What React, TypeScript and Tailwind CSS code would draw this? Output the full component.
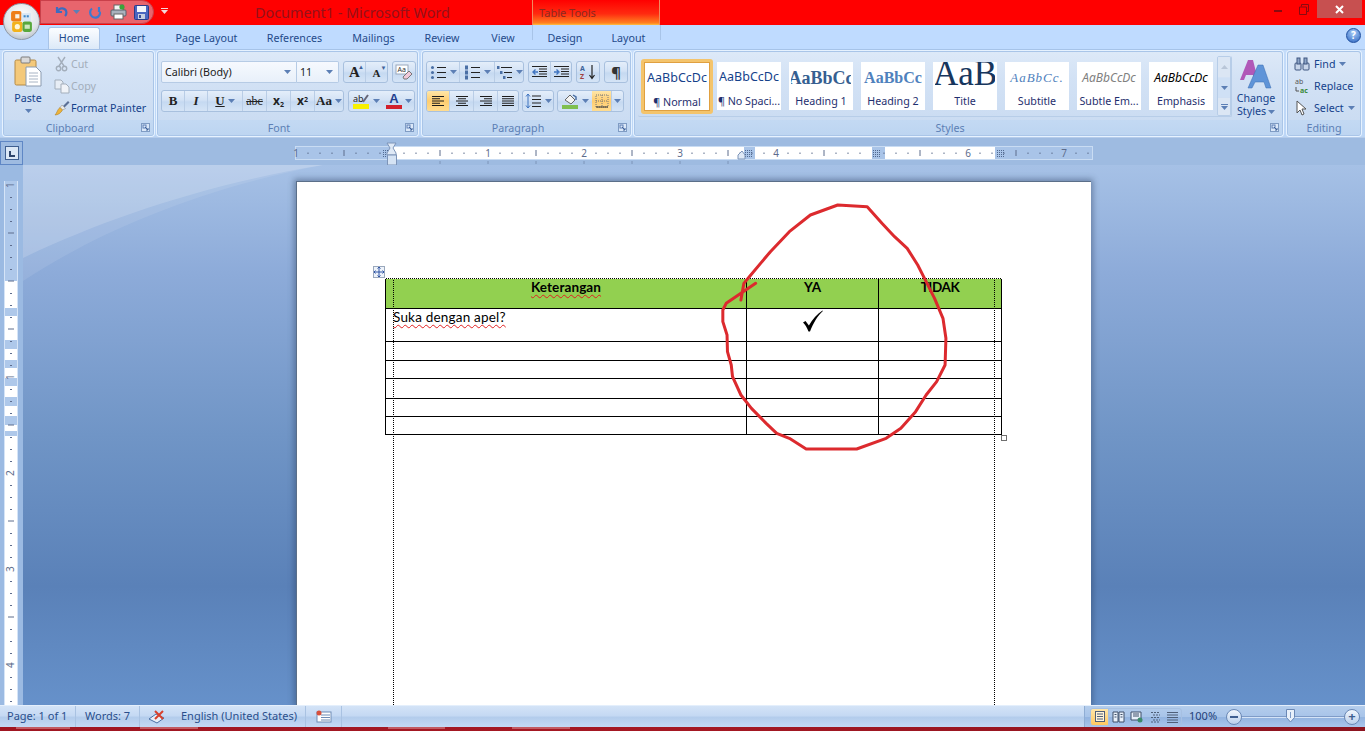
import type { ReactNode } from 'react';

const ui = { fontFamily: '"Noto Sans", sans-serif' };

function Caret({ className = '' }: { className?: string }) {
  return (
    <svg width="7" height="4" viewBox="0 0 7 4" className={`shrink-0 ${className}`}>
      <path d="M0 0h7L3.5 4z" fill="#5c7fb5" />
    </svg>
  );
}

function Launcher() {
  return (
    <svg width="9" height="9" viewBox="0 0 9 9" className="shrink-0">
      <rect x="0.5" y="0.5" width="8" height="8" fill="#dbe8f8" stroke="#7f9cc4" />
      <rect x="2" y="2" width="3" height="3" fill="none" stroke="#5c7fb5" />
      <path d="M4 4l3 3M7 5v2H5" stroke="#3f629a" fill="none" />
    </svg>
  );
}

function Group({ label, w, launcher, children }: { label: string; w: string; launcher?: boolean; children: ReactNode }) {
  return (
    <div className={`${w} h-[85px] shrink-0 flex flex-col rounded-[3px] border border-[#a9c5e8] shadow-[0_0_0_1px_#e6f2ff] overflow-hidden bg-[linear-gradient(#dde9f8,#d3e2f5_30%,#c8daf1_100%)]`}>
      <div className="h-[68px] relative">{children}</div>
      <div className={`h-[15px] pt-[1px] bg-[linear-gradient(#c3d9f3,#bdd5f1)] flex items-center justify-center relative text-[10.7px] leading-none text-[#5c7fb5] ${launcher ? 'pr-[17px]' : ''}`}>
        {label}
        {launcher && <span className="absolute right-[3px] top-[3px] flex"><Launcher /></span>}
      </div>
    </div>
  );
}

function Btn({ w, active, children, last }: { w: string; active?: boolean; children: ReactNode; last?: boolean }) {
  return (
    <div className={`${w} h-full flex items-center justify-center gap-[3px] ${last ? '' : 'border-r border-[#b9cde6]'} ${active ? 'bg-[linear-gradient(#ffe6a8,#ffcd70_50%,#ffdc90)]' : ''}`}>
      {children}
    </div>
  );
}

function BtnGroup({ w, children }: { w: string; children: ReactNode }) {
  return (
    <div className={`${w} h-[22px] shrink-0 flex rounded-[3px] overflow-hidden border border-[#a8c0de] bg-[linear-gradient(#e4eefa,#d3e2f5_45%,#c5d9f1_55%,#d5e4f6)]`}>
      {children}
    </div>
  );
}

function Lines({ kind }: { kind: 'left' | 'center' | 'right' | 'justify' }) {
  const rows = {
    left: [[2, 14], [2, 10], [2, 14], [2, 10], [2, 14]],
    center: [[2, 14], [4, 12], [2, 14], [4, 12], [2, 14]],
    right: [[2, 14], [6, 14], [2, 14], [6, 14], [2, 14]],
    justify: [[2, 14], [2, 14], [2, 14], [2, 14], [2, 14]],
  }[kind];
  return (
    <svg width="16" height="14" viewBox="0 0 16 14">
      {rows.map((r, i) => <path key={i} d={`M${r[0]} ${2.5 + i * 2.25}H${r[1]}`} stroke="#1c1c1c" />)}
    </svg>
  );
}

function Bullets({ kind }: { kind: 'dot' | 'num' | 'multi' }) {
  return (
    <svg width="17" height="15" viewBox="0 0 17 15">
      {[2, 7, 12].map((y, i) => (
        <g key={y}>
          {kind === 'dot' && <circle cx="2.5" cy={y + 0.5} r="1.5" fill="#4a6fa5" />}
          {kind === 'num' && <rect x="1" y={y - 1.5} width="3" height="4" fill="#4a6fa5" />}
          {kind === 'multi' && <rect x={1 + i * 3} y={y - 1} width="2.5" height="3" fill="#4a6fa5" />}
          <path d={`M${kind === 'multi' ? 5 + i * 3 : 7} ${y + 0.5}H16`} stroke="#222" />
        </g>
      ))}
    </svg>
  );
}

function Indent({ flip }: { flip?: boolean }) {
  return (
    <svg width="17" height="14" viewBox="0 0 17 14">
      {[1.5, 4, 6.5, 9, 11.5].map((y, i) => <path key={y} d={`M${i === 0 || i === 4 ? 1 : 8} ${y}H16`} stroke="#222" />)}
      <path d={flip ? 'M1 7h4M3.5 4.5L6 7 3.5 9.5' : 'M7 7H2M4.5 4.5L2 7l2.5 2.5'} stroke="#3f74c0" strokeWidth="1.4" fill="none" />
    </svg>
  );
}

function Tile({ name, active, top, children }: { name: string; active?: boolean; top?: boolean; children: ReactNode }) {
  return (
    <div className={`shrink-0 flex flex-col items-center bg-white overflow-hidden ${active ? 'w-[72px] h-[55px] -my-[3px] border-[3px] border-[#f4c46c] rounded-[3px] shadow-[inset_0_0_0_1px_#e0a040] pt-[1px]' : 'w-[64px] h-[48px]'}`}>
      <div className={`h-[31px] w-[60px] overflow-hidden flex justify-center whitespace-nowrap leading-none ${top ? 'items-end pb-[7px]' : 'items-center'}`}>{children}</div>
      <div className="text-[10.7px] leading-[16px] text-[#1f2f6e] whitespace-nowrap">{name}</div>
    </div>
  );
}

function Ruler() {
  const ticks = Array.from({ length: 67 }, (_, k) => k - 8);
  return (
    <div className="relative w-[798px] h-[14px] ml-[272px] mt-[8px] flex border border-[#c9dcf3] text-[10px]">
      <div className="w-[96px] bg-[#a9c4e8]" />
      <div className="w-[352px] bg-white" />
      <div className="w-[11px] bg-[#a9c4e8]" />
      <div className="w-[117px] bg-white" />
      <div className="w-[13px] bg-[#a9c4e8]" />
      <div className="w-[110px] bg-white" />
      <div className="flex-1 bg-[#a9c4e8]" />
      <svg width="798" height="22" viewBox="0 0 798 22" className="absolute left-[-1px] top-[-1px] overflow-visible">
        <defs>
          <pattern id="marks" width="2" height="2" patternUnits="userSpaceOnUse">
            <rect width="1" height="1" fill="#51698f" />
          </pattern>
        </defs>
        {ticks.map((i) => {
          const x = 97 + i * 12;
          if (i === 0 || i === 40) return null;
          if (i % 8 === 0) return <text key={i} x={x} y="11" textAnchor="middle" fontSize="10" fill="#5d6c8c" style={ui}>{Math.abs(i / 8)}</text>;
          if (i % 4 === 0) return <path key={i} d={`M${x} 4v6`} stroke="#5d6c8c" />;
          return <rect key={i} x={x - 0.5} y="6.5" width="1" height="1.5" fill="#5d6c8c" />;
        })}
        {[145, 193, 241, 289, 337, 385, 433].map((x) => <path key={x} d={`M${x} 15v3`} stroke="#7d94b8" />)}
        {[88, 450, 577, 701].map((x) => <rect key={x} x={x} y="3" width="8" height="8" fill="url(#marks)" />)}
        <path d="M92 -3h9l-3 5v0l3 5v2h-9v-2l3-5-3-5z" fill="#dfe9f6" stroke="#7d94b8" />
        <rect x="92.5" y="9" width="9" height="10" fill="#d5e3f4" stroke="#7d94b8" />
        <path d="M443 13v-4l4-4 3 4v4z" fill="#dfe9f6" stroke="#7d94b8" />
      </svg>
    </div>
  );
}

function SideRuler() {
  const bands = ['h-[100px] bg-[#aec8ea]', 'h-[27px] bg-white', 'h-[8px] bg-[#aec8ea]', 'h-[24px] bg-white', 'h-[9px] bg-[#aec8ea]', 'h-[11px] bg-white', 'h-[8px] bg-[#aec8ea]', 'h-[10px] bg-white', 'h-[8px] bg-[#aec8ea]', 'h-[11px] bg-white', 'h-[9px] bg-[#aec8ea]', 'h-[10px] bg-white', 'h-[9px] bg-[#aec8ea]', 'h-[6px] bg-white', 'h-[5px] bg-[#aec8ea]', 'flex-1 bg-white'];
  const ticks = Array.from({ length: 44 }, (_, k) => k - 8);
  return (
    <div className="relative w-[23px] h-full bg-[#9bbae2] pl-[4px] pt-[16px] shrink-0">
      <div className="relative w-[14px] h-full flex flex-col border-x border-[#d5e4f7]">
        {bands.map((b, i) => <div key={i} className={b} />)}
        <svg width="14" height="524" viewBox="0 0 14 524" className="absolute left-[-1px] top-0">
          {ticks.map((i) => {
            const y = 100 + i * 12;
            if (i % 8 === 0 && i !== 0) return <text key={i} x="7" y={y + 3} textAnchor="middle" fontSize="10" fill="#5d6c8c" transform={`rotate(-90 7 ${y})`} style={ui}>{Math.abs(i / 8)}</text>;
            if (i % 4 === 0) return <path key={i} d={`M4 ${y}h6`} stroke="#5d6c8c" />;
            return <rect key={i} x="6" y={y} width="2" height="1" fill="#5d6c8c" />;
          })}
        </svg>
      </div>
    </div>
  );
}

function Page() {
  const rows = ['h-[33px]', 'h-[19px]', 'h-[18px]', 'h-[20px]', 'h-[18px]', 'h-[18px]'];
  const cell = 'border border-black p-0 align-top';
  return (
    <div className="relative ml-[273px] mt-[16px] w-[795px] h-[524px] bg-white border-l border-t border-[#5b6f89] shadow-[0_0_6px_2px_rgba(40,60,90,0.45)] pl-[88px] pt-[96px] font-['Lato',sans-serif] text-[13.5px] text-black">
      <table className="w-[617px] border-collapse table-fixed">
        <colgroup>
          <col className="w-[361px]" />
          <col className="w-[132px]" />
          <col />
        </colgroup>
        <tbody>
          <tr className="h-[30px] bg-[#92d050] font-bold leading-[17px]">
            <td className={`${cell} text-center`}><span className="underline decoration-wavy decoration-[#e02020] decoration-1 underline-offset-2 tracking-[0.1px]">Keterangan</span></td>
            <td className={`${cell} text-center`}>YA</td>
            <td className={`${cell} text-center tracking-[-0.4px]`}>TIDAK</td>
          </tr>
          {rows.map((h, i) => (
            <tr key={h + i} className={h}>
              <td className={`${cell} pl-[7px] leading-[17px]`}>
                {i === 0 && <span className="underline decoration-wavy decoration-[#e02020] decoration-1 underline-offset-2 tracking-[0.2px]">Suka dengan apel?</span>}
              </td>
              <td className={cell}>
                {i === 0 && (
                  <svg width="22" height="24" viewBox="0 0 22 24" className="mx-auto">
                    <path d="M1 13.5l2.5-1.6 3.4 4.6C10.5 10 15 5 20.5 1.5l.4.5C15.5 7 11.5 13.5 8 22.5h-1.5C5 18.5 3.2 15.5 1 13.5z" fill="#000" />
                  </svg>
                )}
              </td>
              <td className={cell} />
            </tr>
          ))}
        </tbody>
      </table>
      {/* text boundaries and table handles, they lie over the table */}
      <div className="absolute left-[96px] top-[96px] bottom-0 border-l border-dotted border-black" />
      <div className="absolute left-[697px] top-[96px] bottom-0 border-l border-dotted border-black" />
      <div className="absolute left-[88px] top-[96px] w-[617px] border-t border-dotted border-white" />
      <div className="absolute left-[76px] top-[84px] w-[12px] h-[12px] bg-[#eef3fa] border border-[#9aa8bc] flex items-center justify-center">
        <svg width="10" height="10" viewBox="0 0 10 10"><path d="M5 0v10M0 5h10M3.5 1.5L5 0l1.5 1.5M3.5 8.5L5 10l1.5-1.5M1.5 3.5L0 5l1.5 1.5M8.5 3.5L10 5 8.5 6.5" stroke="#2f55a5" fill="none" /></svg>
      </div>
      <div className="absolute left-[704px] top-[253px] w-[6px] h-[6px] bg-white border border-[#6f6f6f]" />
      <svg width="660" height="265" viewBox="0 0 1568 795" preserveAspectRatio="none" className="absolute left-[63px] top-[13px] pointer-events-none">
        <path
          d="M940 265L905 295 870 325 862 345 862 380 872 420 873 470 882 510 885 545 905 600 930 640 965 685 990 715 1020 730 1060 762 1180 762 1250 730 1285 700 1320 650 1345 600 1370 560 1390 510 1392 430 1385 370 1365 310 1345 260 1325 210 1300 160 1270 125 1240 85 1205 35 1135 30 1070 60 1020 110 975 170 925 245 912 265 905 315"
          fill="none"
          stroke="#dc2a2e"
          strokeWidth="3"
          strokeLinejoin="round"
          strokeLinecap="round"
          vectorEffect="non-scaling-stroke"
        />
      </svg>
    </div>
  );
}

export default function App() {
  return (
    <div className="relative w-[1365px] h-[731px] overflow-hidden flex flex-col bg-[#bfdbff]" style={ui}>
      {/* title bar */}
      <div className="h-[25px] shrink-0 flex bg-[#ff0000]">
        <div className="ml-[40px] w-[114px] h-[24px] rounded-r-full bg-[#e8656d] border border-[#c9404a] flex items-center pl-[13px] gap-[5px]">
          <svg width="14" height="14" viewBox="0 0 14 14"><path d="M3 2v5h5M3.5 6.5C5 3.5 8 2.5 10.5 4c2.5 1.7 2.5 5 .5 7" stroke="#3d6cc0" strokeWidth="2.2" fill="none" /></svg>
          <Caret />
          <svg className="ml-[3px]" width="15" height="15" viewBox="0 0 15 15"><path d="M11 2v5M4 3.5C1.5 5.5 1.5 9.5 4 11.5c2.5 2 6 1.5 7.5-1.5 .5-1 .5-2.5.3-3" stroke="#3d7ad0" strokeWidth="2.2" fill="none" /></svg>
          <svg className="ml-[2px]" width="17" height="16" viewBox="0 0 17 16"><rect x="4" y="1" width="9" height="6" fill="#f4f4f4" stroke="#666" /><rect x="1" y="6" width="15" height="6" rx="1" fill="#a9b2bd" stroke="#58616c" /><rect x="4" y="10" width="9" height="5" fill="#fff" stroke="#666" /><circle cx="12" cy="3" r="2.6" fill="#3aa53a" /></svg>
          <svg className="ml-[2px]" width="15" height="15" viewBox="0 0 15 15"><rect x="0.5" y="0.5" width="14" height="14" rx="1" fill="#4a66c0" stroke="#2a3c88" /><rect x="3" y="1" width="9" height="6" fill="#f3f6fb" /><rect x="4" y="9" width="7" height="5" fill="#c6cfe0" /><rect x="5" y="10" width="2" height="3" fill="#3a4f99" /></svg>
        </div>
        <div className="ml-[5px] w-[10px] mt-[8px] flex flex-col items-center gap-[1px]">
          <div className="w-[7px] h-[1px] bg-[#f4d6da]" />
          <svg width="7" height="4" viewBox="0 0 7 4"><path d="M0 0h7L3.5 4z" fill="#f4d6da" /></svg>
        </div>
        <div className="ml-[86px] w-[277px] text-[14.4px] leading-[26px] text-[#94111a] whitespace-nowrap">Document1 - Microsoft Word</div>
        <div className="w-[128px] h-[25px] border-x border-[#f08a60] bg-[linear-gradient(#ff0000,#ff2a10_55%,#ff8020_92%,#ffc040)] pl-[6px] text-[11px] leading-[26px] text-[#8a2a20]">Table Tools</div>
        <div className="ml-auto mr-[3px] flex items-start">
          <div className="w-[26px] h-[18px] flex items-end justify-center pb-[6px]"><div className="w-[8px] h-[2px] bg-[#8a0a10]" /></div>
          <div className="w-[26px] h-[18px] flex items-center justify-center">
            <svg width="10" height="11" viewBox="0 0 10 11"><path d="M2.5 2.5V.5h7v7h-2M.5 3h7v7.5h-7z" fill="none" stroke="#8a0a10" /></svg>
          </div>
          <div className="w-[45px] h-[18px] bg-[#c75050] flex items-center justify-center">
            <svg width="9" height="9" viewBox="0 0 9 9"><path d="M1 1l7 7M8 1L1 8" stroke="#fff" strokeWidth="2" /></svg>
          </div>
        </div>
      </div>

      {/* office button */}
      <div className="absolute left-[3px] top-[3px] w-[37px] h-[37px] rounded-full bg-[radial-gradient(circle_at_50%_35%,#ffffff,#dfe3e8_60%,#9aa4b0)] border border-[#8d97a5] flex items-center justify-center">
        <svg width="25" height="25" viewBox="0 0 24 24">
          <rect x="2" y="2" width="10" height="10" rx="2" fill="#ee7d1a" />
          <rect x="6" y="5" width="4" height="4" fill="#f8f2e8" />
          <rect x="12" y="4" width="9" height="8" fill="#d8e6f4" />
          <rect x="14" y="6" width="2" height="2" fill="#3f88c8" />
          <rect x="17" y="6" width="2" height="2" fill="#3f88c8" />
          <rect x="3" y="12" width="10" height="10" rx="2" fill="#f2b21c" />
          <rect x="13" y="12" width="9" height="10" rx="2" fill="#58a83c" />
          <circle cx="8" cy="17" r="2.5" fill="#fff6d8" />
          <rect x="15" y="15" width="5" height="4" fill="#cfe8bf" />
        </svg>
      </div>

      {/* tabs */}
      <div className="h-[24px] shrink-0 flex pl-[48px] pt-[2px] text-[10.7px] text-[#1f4a8a] bg-[#bfdbff]">
        <div className="w-[52px] h-[22px] rounded-t-[3px] border border-b-0 border-[#a8c4e8] bg-[linear-gradient(#fbfdff,#dce9f8)] flex items-center justify-center">Home</div>
        {[['w-[61px]', 'Insert'], ['w-[91px]', 'Page Layout'], ['w-[85px]', 'References'], ['w-[73px]', 'Mailings'], ['w-[64px]', 'Review'], ['w-[58px]', 'View']].map(([w, t]) => (
          <div key={t} className={`${w} h-[22px] flex items-center justify-center`}>{t}</div>
        ))}
        <div className="flex border-x border-[#a8c4e8] h-[15px] -mt-[2px] pt-[2px]">
          <div className="w-[64px] h-[22px] flex items-center justify-center">Design</div>
          <div className="w-[63px] h-[22px] flex items-center justify-center">Layout</div>
        </div>
        <div className="ml-auto mr-[4px] mt-[1px] w-[15px] h-[15px] rounded-full bg-[radial-gradient(circle_at_50%_30%,#a8cdf8,#2c64c0)] border border-[#1f4f9f] text-white text-[10px] font-bold leading-[13px] text-center">?</div>
      </div>

      {/* ribbon */}
      <div className="h-[88px] shrink-0 flex pl-[3px] pt-[1px] border-t border-[#a6c3e8] bg-[linear-gradient(#c4dcfa,#bcd6f6)] text-[10.7px] text-[#15428b]">
        <Group label="Clipboard" w="w-[151px]" launcher>
          <div className="flex h-full">
            <div className="w-[46px] flex flex-col items-center pl-[2px] pt-[4px]">
              <svg width="28" height="31" viewBox="0 0 28 31">
                <rect x="1" y="4" width="21" height="25" rx="1.5" fill="#f4c97a" stroke="#b48a46" />
                <rect x="7" y="1" width="9" height="6" rx="1" fill="#d9d9d9" stroke="#7d7d7d" />
                <path d="M12 11h10l5 5v14H12z" fill="#fff" stroke="#8b9bb0" />
                <path d="M15 17h9M15 20h9M15 23h9M15 26h9" stroke="#a8b4c4" />
              </svg>
              <div className="leading-[14px] mt-[4px]">Paste</div>
              <Caret className="mt-[4px]" />
            </div>
            <div className="flex flex-col pt-[1px] pl-[2px]">
              {[
                ['Cut', 'text-[#a3aebb]', <svg key="c" width="13" height="16" viewBox="0 0 13 16"><path d="M3 1l6 9M10 1L4 10" stroke="#a3aebb" strokeWidth="1.4" /><circle cx="3.5" cy="12.5" r="2.2" fill="none" stroke="#a3aebb" strokeWidth="1.4" /><circle cx="9.5" cy="12.5" r="2.2" fill="none" stroke="#a3aebb" strokeWidth="1.4" /></svg>],
                ['Copy', 'text-[#a3aebb]', <svg key="p" width="16" height="15" viewBox="0 0 16 15"><path d="M1 1h6l2 2v7H1z" fill="#e7edf5" stroke="#a3aebb" /><path d="M7 5h5l3 3v6H7z" fill="#f0f3f8" stroke="#a3aebb" /></svg>],
                ['Format Painter', '', <svg key="f" width="16" height="16" viewBox="0 0 16 16"><path d="M9 6l5-5 1.5 1.5-5 5z" fill="#5a6f96" /><path d="M8 5l3.5 3.5-3 1.5L6 7.5z" fill="#e8e8e8" stroke="#888" strokeWidth="0.5" /><path d="M6 7.5L8.500 10C7 13 4 15 1 15c2-2 2-5 5-7.500z" fill="#eeb43c" stroke="#a57a20" strokeWidth="0.5" /></svg>],
              ].map(([t, c, icon]) => (
                <div key={t as string} className={`h-[22px] flex items-center whitespace-nowrap ${c}`}>
                  <span className="w-[19px] flex justify-center">{icon}</span>
                  <span>{t}</span>
                </div>
              ))}
            </div>
          </div>
        </Group>

        <div className="w-[3px] shrink-0" />
        <Group label="Font" w="w-[261px]" launcher>
          <div className="pt-[9px] pl-[3px] flex flex-col gap-[7px] text-[#222]">
            <div className="flex h-[22px]">
              <div className="w-[136px] border border-[#b6cbe5] bg-[linear-gradient(#f6f9fe,#e8f0fa)] flex items-center pl-[3px] pr-[5px] justify-between rounded-l-[2px]">Calibri (Body)<Caret /></div>
              <div className="w-[42px] border border-l-0 border-[#b6cbe5] bg-[linear-gradient(#f6f9fe,#e8f0fa)] flex items-center pl-[3px] pr-[5px] justify-between rounded-r-[2px]">11<Caret /></div>
              <div className="ml-[4px]"><BtnGroup w="w-[45px]">
                <Btn w="w-[22px]"><span className="font-['Liberation_Serif',serif] font-bold text-[15px] leading-none relative">A<span className="absolute right-[-4px] top-[-1px] text-[6px] text-[#3f629a]">▲</span></span></Btn>
                <Btn w="flex-1" last><span className="font-['Liberation_Serif',serif] font-bold text-[11px] leading-none relative mt-[2px]">A<span className="absolute right-[-6px] top-[-3px] text-[6px] text-[#3f629a]">▼</span></span></Btn>
              </BtnGroup></div>
              <div className="ml-[4px]"><BtnGroup w="w-[24px]"><Btn w="w-full" last>
                <svg width="18" height="17" viewBox="0 0 18 17"><rect x="1" y="1" width="12" height="9" fill="#fff" stroke="#9aa8bc" /><text x="2.500" y="8" fontSize="7" fill="#333" style={ui}>Aa</text><path d="M8 13l6-6 3 3-5 5H9z" fill="#f0c8d8" stroke="#777" /></svg>
              </Btn></BtnGroup></div>
            </div>
            <div className="flex h-[22px]">
              <BtnGroup w="w-[183px]">
                <Btn w="w-[23px]"><span className="font-['Liberation_Serif',serif] font-bold text-[13px]">B</span></Btn>
                <Btn w="w-[23px]"><span className="font-['Liberation_Serif',serif] italic font-bold text-[13px]">I</span></Btn>
                <Btn w="w-[35px]"><span className="font-['Liberation_Serif',serif] font-bold text-[13px] underline">U</span><Caret /></Btn>
                <Btn w="w-[24px]"><span className="font-['Liberation_Serif',serif] text-[12px] line-through">abc</span></Btn>
                <Btn w="w-[24px]"><span className="font-bold text-[12px]">x<sub className="text-[7px]">2</sub></span></Btn>
                <Btn w="w-[24px]"><span className="font-bold text-[12px]">x<sup className="text-[7px]">2</sup></span></Btn>
                <Btn w="flex-1" last><span className="font-['Liberation_Serif',serif] font-bold text-[13px]">Aa</span><Caret /></Btn>
              </BtnGroup>
              <div className="ml-[4px]"><BtnGroup w="w-[67px]">
                <Btn w="w-[35px]" last>
                  <svg width="17" height="16" viewBox="0 0 17 16"><rect y="11" width="16" height="5" fill="#f8f000" /><text x="0" y="9" fontSize="9" fill="#222" style={ui}>ab</text><path d="M10 9l5-7" stroke="#667" strokeWidth="2" /></svg>
                  <Caret />
                </Btn>
                <Btn w="flex-1" last>
                  <div className="flex flex-col items-center leading-none"><span className="font-['Liberation_Sans',sans-serif] font-bold text-[13px] text-[#23408f] leading-[12px]">A</span><span className="w-[16px] h-[4px] bg-[#d2202c]" /></div>
                  <Caret />
                </Btn>
              </BtnGroup></div>
            </div>
          </div>
        </Group>

        <div className="w-[4px] shrink-0" />
        <Group label="Paragraph" w="w-[209px]" launcher>
          <div className="pt-[9px] pl-[3px] flex flex-col gap-[7px]">
            <div className="flex gap-[4px]">
              <BtnGroup w="w-[98px]">
                <Btn w="w-[33px]"><Bullets kind="dot" /><Caret /></Btn>
                <Btn w="w-[35px]"><Bullets kind="num" /><Caret /></Btn>
                <Btn w="flex-1" last><Bullets kind="multi" /><Caret /></Btn>
              </BtnGroup>
              <BtnGroup w="w-[44px]">
                <Btn w="w-[22px]"><Indent /></Btn>
                <Btn w="flex-1" last><Indent flip /></Btn>
              </BtnGroup>
              <BtnGroup w="w-[24px]"><Btn w="w-full" last>
                <svg width="18" height="16" viewBox="0 0 18 16"><text x="1" y="7" fontSize="7" fontWeight="bold" fill="#3f629a" style={ui}>A</text><text x="1" y="15" fontSize="7" fontWeight="bold" fill="#a04040" style={ui}>Z</text><path d="M13 1v13M10.500 11l2.500 3.500 2.500-3.500" stroke="#222" strokeWidth="1.2" fill="none" /></svg>
              </Btn></BtnGroup>
              <BtnGroup w="w-[24px]"><Btn w="w-full" last><span className="text-[15px] leading-none font-bold text-[#333]">¶</span></Btn></BtnGroup>
            </div>
            <div className="flex gap-[3px]">
              <BtnGroup w="w-[93px]">
                <Btn w="w-[23px]" active><Lines kind="left" /></Btn>
                <Btn w="w-[24px]"><Lines kind="center" /></Btn>
                <Btn w="w-[24px]"><Lines kind="right" /></Btn>
                <Btn w="flex-1" last><Lines kind="justify" /></Btn>
              </BtnGroup>
              <BtnGroup w="w-[32px]"><Btn w="w-full" last>
                <svg width="17" height="16" viewBox="0 0 17 16"><path d="M3 1v14M1 3.500L3 1l2 2.500M1 12.500L3 15l2-2.500" stroke="#3f74c0" fill="none" /><path d="M7 3h9M7 6.500h9M7 10h9M7 13.500h9" stroke="#222" /></svg>
                <Caret />
              </Btn></BtnGroup>
              <BtnGroup w="w-[67px]">
                <Btn w="w-[34px]" last>
                  <svg width="17" height="16" viewBox="0 0 17 16"><rect y="12" width="16" height="4" fill="#7fbf50" /><path d="M3 7l5-5 5 5-4 4z" fill="#f4f4f4" stroke="#666" /><path d="M11 2l3 2v3" stroke="#4a6fa5" strokeWidth="1.500" fill="none" /></svg>
                  <Caret />
                </Btn>
                <Btn w="w-[20px]" active>
                  <svg width="14" height="14" viewBox="0 0 14 14"><rect x="1" y="1" width="12" height="12" fill="none" stroke="#777" strokeDasharray="1 1" /><path d="M7 1v12M1 7h12" stroke="#777" strokeDasharray="1 1" /><path d="M1 13h12" stroke="#333" /></svg>
                </Btn>
                <Btn w="flex-1" last><Caret /></Btn>
              </BtnGroup>
            </div>
          </div>
        </Group>

        <div className="w-[3px] shrink-0" />
        <Group label="Styles" w="w-[649px]" launcher>
          <div className="flex h-full pl-[3px] pt-[4px]">
            <div className="w-[594px] h-[61px] border-b border-r border-[#b7cde8] rounded-[2px] flex gap-[8px] pl-[3px] pt-[6px] items-start">
              <Tile name="¶ Normal" active><span className="text-[12.5px]">AaBbCcDc</span></Tile>
              <div className="-ml-[4px]"><Tile name="¶ No Spaci..."><span className="text-[12.5px]">AaBbCcDc</span></Tile></div>
              <Tile name="Heading 1"><span className="font-['Liberation_Serif',serif] font-bold text-[18px] text-[#365f91]">AaBbCc</span></Tile>
              <Tile name="Heading 2"><span className="font-['Liberation_Serif',serif] font-bold text-[16px] text-[#4f81bd]">AaBbCc</span></Tile>
              <Tile name="Title" top><span className="font-['Liberation_Serif',serif] text-[35px] text-[#17365d] leading-[24px]">AaB</span></Tile>
              <Tile name="Subtitle"><span className="font-['Liberation_Serif',serif] italic text-[13px] tracking-[1px] text-[#4f81bd]">AaBbCc.</span></Tile>
              <Tile name="Subtle Em..."><span className="italic text-[12px] text-[#808080]">AaBbCcDc</span></Tile>
              <Tile name="Emphasis"><span className="italic text-[12px] text-black">AaBbCcDc</span></Tile>
              <div className="-ml-[4px] -mt-[6px] w-[15px] h-[60px] flex flex-col gap-[1px] border border-[#b7cde8] rounded-[2px] overflow-hidden">
                <div className="h-[20px] bg-[#dbe6f4] flex items-center justify-center"><svg width="7" height="4" viewBox="0 0 7 4"><path d="M3.500 0L7 4H0z" fill="#b9c6d8" /></svg></div>
                <div className="h-[19px] bg-[#cfe0f5] flex items-center justify-center"><Caret /></div>
                <div className="flex-1 bg-[#dbe6f4] flex flex-col items-center justify-center gap-[1px]"><div className="w-[7px] h-[1px] bg-[#5c7fb5]" /><Caret /></div>
              </div>
            </div>
            <div className="w-[48px] flex flex-col items-center pt-[2px] leading-[13px]">
              <svg width="34" height="31" viewBox="0 0 34 31">
                <path d="M1 22L9 2h5l5 20h-4l-1-5H7l-2 5z" fill="#b058b8" />
                <path d="M9 30L19 7h5l8 23h-5l-2-6h-9l-3 6z" fill="#5f94d8" stroke="#3a6cb0" strokeWidth="0.5" />
              </svg>
              <div className="mt-[3px]">Change</div>
              <div className="flex items-center gap-[2px]">Styles<Caret /></div>
            </div>
          </div>
        </Group>

        <div className="w-[4px] shrink-0" />
        <Group label="Editing" w="w-[74px]">
          <div className="flex flex-col pl-[6px] pt-[1px]">
            <div className="h-[22px] flex items-center gap-[4px]">
              <svg width="16" height="14" viewBox="0 0 16 14"><rect x="1" y="6" width="6" height="7" rx="1" fill="#c8d6ea" stroke="#3f5680" /><rect x="9" y="6" width="6" height="7" rx="1" fill="#c8d6ea" stroke="#3f5680" /><rect x="3" y="1" width="3" height="6" fill="#8ea6c8" stroke="#3f5680" /><rect x="10" y="1" width="3" height="6" fill="#8ea6c8" stroke="#3f5680" /></svg>
              Find<Caret />
            </div>
            <div className="h-[22px] flex items-center gap-[4px]">
              <svg width="16" height="16" viewBox="0 0 16 16"><text x="1" y="6" fontSize="7" fill="#555" style={ui}>ab</text><text x="6" y="15" fontSize="7" fontWeight="bold" fill="#3a8a3a" style={ui}>ac</text><path d="M2 9v4h3" stroke="#555" fill="none" /></svg>
              Replace
            </div>
            <div className="h-[22px] flex items-center gap-[4px]">
              <svg width="16" height="16" viewBox="0 0 16 16"><path d="M3 1v12l3-3 2 5 2-1-2-5h4z" fill="#fff" stroke="#555" /></svg>
              Select<Caret />
            </div>
          </div>
        </Group>
      </div>

      {/* ruler row */}
      <div className="h-[28px] shrink-0 flex bg-[#9ebbe1] border-t border-[#b5cceb]">
        <div className="w-[23px] h-[24px] mt-[3px] border border-[#5f87c5] flex items-center justify-center">
          <div className="w-[14px] h-[14px] bg-[#dce8f6] border border-[#3f5f90] flex items-end justify-start pl-[3px] pb-[2px]">
            <div className="w-[6px] h-[6px] border-l-2 border-b-2 border-[#2f466c]" />
          </div>
        </div>
        <Ruler />
      </div>

      {/* document area */}
      <div className="h-[540px] shrink-0 flex overflow-hidden">
        <SideRuler />
        <div className="relative flex-1 overflow-hidden bg-[linear-gradient(#a6c1e6,#8dabd9_20%,#7095c6_50%,#5a81b8_78%,#6691ca)]">
          <svg width="300" height="120" viewBox="0 0 300 120" className="absolute left-0 top-0">
            <path d="M0 116C70 70 170 25 300 0H0z" fill="#ffffff" fillOpacity="0.09" />
            <path d="M0 93C80 55 180 20 300 0H0z" fill="#ffffff" fillOpacity="0.16" />
          </svg>
          <Page />
        </div>
      </div>

      {/* status bar */}
      <div className="h-[22px] shrink-0 flex items-center border-t border-[#e4effc] bg-[linear-gradient(#d3e3f7,#c5d9f3_45%,#b3ccec_55%,#c4d9f4)] text-[11px] text-[#2a4f8c]">
        <div className="w-[76px] pl-[7px] h-full flex items-center border-r border-[#a9c2e2]">Page: 1 of 1</div>
        <div className="w-[64px] pl-[9px] h-full flex items-center border-r border-[#a9c2e2]">Words: 7</div>
        <div className="w-[166px] pl-[8px] h-full flex items-center border-r border-[#a9c2e2] whitespace-nowrap">
          <svg width="18" height="15" viewBox="0 0 18 15" className="mr-[15px] shrink-0"><path d="M1 10l7-5 8 4-7 5z" fill="#e8eff8" stroke="#4a6fa5" /><path d="M7 2l8 8M15 2l-8 8" stroke="#d8402c" strokeWidth="2" /></svg>
          English (United States)
        </div>
        <div className="w-[36px] h-full flex items-center justify-center border-r border-[#a9c2e2]">
          <svg width="16" height="13" viewBox="0 0 16 13"><rect x="1" y="2" width="14" height="10" fill="#fff" stroke="#6f8cb5" /><path d="M5 5h9M5 7.500h9M5 10h9" stroke="#6f8cb5" /><circle cx="3" cy="3" r="2.500" fill="#d8503c" /></svg>
        </div>
        <div className="ml-auto w-[281px] h-full border-l border-[#8fadd4] flex items-center bg-[linear-gradient(#b4cdec,#a8c4e9_50%,#93b4e0_55%,#a9c6ec)] pl-[5px]">
          <div className="w-[92px] h-[18px] flex rounded-[3px] border border-[#a6c0e2] overflow-hidden">
            <div className="w-[18px] bg-[linear-gradient(#ffe6a8,#ffc860)] flex items-center justify-center border-r border-[#a6c0e2]">
              <svg width="10" height="11" viewBox="0 0 10 11"><rect x="0.500" y="0.500" width="9" height="10" fill="#fff4d8" stroke="#4f5f78" /><path d="M2 3h6M2 5.500h6M2 8h6" stroke="#4f5f78" /></svg>
            </div>
            {['open', 'web', 'out', 'draft'].map((k) => (
              <div key={k} className="flex-1 flex items-center justify-center">
                <svg width="13" height="12" viewBox="0 0 13 12">
                  {k === 'open' && <path d="M1 1h5v10H1zM7 1h5v10H7zM2.500 3.500h2M2.500 6h2M8.500 3.500h2M8.500 6h2" fill="#e8f0fa" stroke="#3f4f68" />}
                  {k === 'web' && <><path d="M1 1h10v8H1zM3 3h6M3 5h6" fill="#e8f0fa" stroke="#3f4f68" /><circle cx="10" cy="9" r="2.500" fill="#3a8a6a" /></>}
                  {k === 'out' && <path d="M3 1.500h9M5 4h7M3 6.500h9M5 9h7M3 11h9" stroke="#4f5f78" strokeDasharray="2 1" />}
                  {k === 'draft' && <path d="M1 1.500h11M1 4h11M1 6.500h11M1 9h11M1 11.500h11" stroke="#4f5f78" />}
                </svg>
              </div>
            ))}
          </div>
          <div className="ml-[7px] w-[28px] text-[#1f3f78]">100%</div>
          <div className="relative ml-[9px] w-[134px] h-[17px] flex items-center justify-between">
            <div className="absolute left-[8px] right-[8px] top-[8px] h-[1px] bg-[#7f9cc8] shadow-[0_1px_0_#d5e4f7]" />
            <div className="relative z-10 w-[16px] h-[16px] rounded-full border border-[#6a88b5] bg-[linear-gradient(#f2f7fd,#b9cfec)] flex items-center justify-center"><div className="w-[8px] h-[2px] bg-[#3f5f90]" /></div>
            <div className="relative z-10 w-[16px] h-[16px] rounded-full border border-[#6a88b5] bg-[linear-gradient(#f2f7fd,#b9cfec)] flex items-center justify-center text-[#3f5f90] font-bold text-[13px] leading-none">+</div>
            <svg width="9" height="14" viewBox="0 0 9 14" className="absolute left-[60px] top-[1px]"><path d="M.5.500h8v8L4.500 13 .5 8.500z" fill="#e8f0fa" stroke="#6a88b5" /><path d="M4.500 3v6" stroke="#7f9cc8" /></svg>
          </div>
        </div>
      </div>

      {/* windows taskbar edge */}
      <div className="h-[4px] shrink-0 flex bg-[linear-gradient(90deg,#a01622,#a51823_50%,#8c1420)]">
        {['ml-[16px] w-[54px]', 'ml-[70px] w-[58px]', 'ml-[190px] w-[57px]', 'ml-[67px] w-[58px]'].map((c) => (
          <div key={c} className={`${c} h-[2px] bg-[#c25a62]`} />
        ))}
      </div>
    </div>
  );
}
